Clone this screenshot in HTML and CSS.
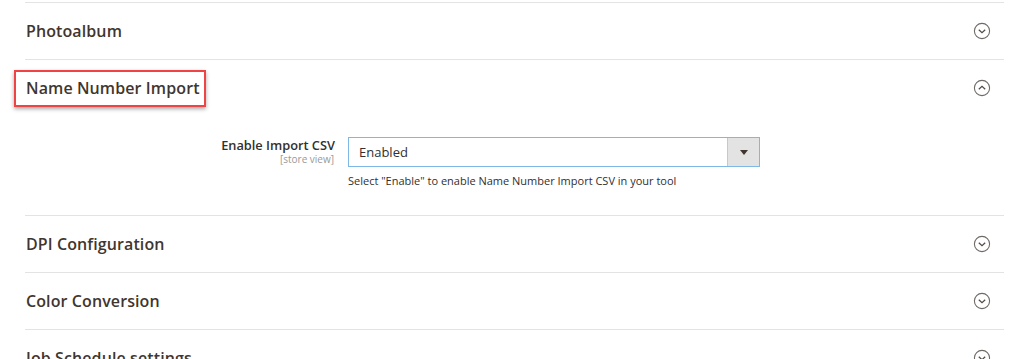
FILE: index.html
```html
<!DOCTYPE html>
<html lang="en">
<head>
<meta charset="utf-8">
<title>Configuration</title>
<link rel="stylesheet" href="styles.css">
</head>
<body>
<div class="page">
  <section class="section">
    <div class="section-head">
      <span class="section-title">Photoalbum</span>
      <svg class="toggle" viewBox="0 0 18 18" width="18" height="18"><circle cx="9" cy="9" r="7.6"/><path d="M5.8 7.8 L9 10.8 L12.2 7.8"/></svg>
    </div>
  </section>
  <section class="section">
    <div class="section-head">
      <span class="section-title highlighted">Name Number Import</span>
      <svg class="toggle" viewBox="0 0 18 18" width="18" height="18"><circle cx="9" cy="9" r="7.6"/><path d="M5.8 10.2 L9 7.2 L12.2 10.2"/></svg>
    </div>
    <div class="section-body">
      <div class="field">
        <div class="field-label">
          <span class="label-text">Enable Import CSV</span>
          <span class="scope">[store view]</span>
        </div>
        <div class="field-control">
          <div class="select">
            <span class="select-value">Enabled</span>
            <span class="select-arrow"><span class="triangle"></span></span>
          </div>
          <div class="note">Select "Enable" to enable Name Number Import CSV in your tool</div>
        </div>
      </div>
    </div>
  </section>
  <section class="section">
    <div class="section-head">
      <span class="section-title">DPI Configuration</span>
      <svg class="toggle" viewBox="0 0 18 18" width="18" height="18"><circle cx="9" cy="9" r="7.6"/><path d="M5.8 7.8 L9 10.8 L12.2 7.8"/></svg>
    </div>
  </section>
  <section class="section">
    <div class="section-head">
      <span class="section-title">Color Conversion</span>
      <svg class="toggle" viewBox="0 0 18 18" width="18" height="18"><circle cx="9" cy="9" r="7.6"/><path d="M5.8 7.8 L9 10.8 L12.2 7.8"/></svg>
    </div>
  </section>
  <section class="section">
    <div class="section-head">
      <span class="section-title">Job Schedule settings</span>
      <svg class="toggle" viewBox="0 0 18 18" width="18" height="18"><circle cx="9" cy="9" r="7.6"/><path d="M5.8 7.8 L9 10.8 L12.2 7.8"/></svg>
    </div>
  </section>
</div>
</body>
</html>
```
FILE: styles.css
```css
html, body {
  margin: 0;
  padding: 0;
  background: #ffffff;
  overflow: hidden;
}
body {
  font-family: "Open Sans", "Liberation Sans", sans-serif;
  color: #303030;
}
.page {
  padding: 2px 20px 0 25px;
}
.section {
  border-top: 1px solid #e3e3e3;
}
.section-head {
  height: 56px;
  display: flex;
  align-items: center;
  justify-content: space-between;
  padding-right: 13px;
}
.section-title {
  font-size: 16px;
  font-weight: 600;
  color: #41362f;
  line-height: 21px;
  padding-left: 1px;
  letter-spacing: 0.1px;
}
.section-title.highlighted {
  border: 2px solid #ee4446;
  padding: 6px 4px 6px 10px;
  margin-left: -11px;
  box-shadow: 0 2px 4px rgba(0, 0, 0, 0.35);
}
.toggle {
  fill: none;
  stroke: #6f6a66;
  stroke-width: 1.1;
}
.toggle path {
  stroke: #514943;
  stroke-width: 1.2;
}
.section-body {
  height: 99px;
  padding-top: 21px;
  box-sizing: border-box;
}
.field {
  display: grid;
  grid-template-columns: 310px 412px;
  column-gap: 13px;
}
.field-label {
  display: flex;
  flex-direction: column;
  align-items: flex-end;
  padding-top: 1px;
}
.label-text {
  font-size: 12.8px;
  font-weight: 600;
  line-height: 15px;
  color: #303030;
}
.scope {
  font-size: 10px;
  line-height: 12px;
  color: #999999;
  padding-right: 1px;
}
.select {
  height: 30px;
  border: 1px solid #7fb7e6;
  display: flex;
  align-items: stretch;
  box-sizing: border-box;
}
.select-value {
  flex: 1;
  display: flex;
  align-items: center;
  padding-left: 10px;
  font-size: 13px;
  color: #303030;
}
.select-arrow {
  width: 31px;
  background: #e3e3e3;
  border-left: 1px solid #c8c8c8;
  display: flex;
  align-items: center;
  justify-content: center;
}
.triangle {
  width: 0;
  height: 0;
  border-left: 4px solid transparent;
  border-right: 4px solid transparent;
  border-top: 5px solid #41362f;
}
.note {
  margin-top: 7px;
  font-size: 11px;
  line-height: 14px;
  color: #303030;
}
```
